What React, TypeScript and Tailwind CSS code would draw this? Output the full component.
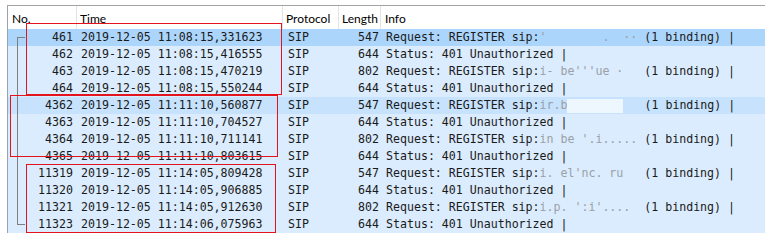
import React from "react";

type Row = {
  no: string;
  time: string;
  len: string;
  kind: "req" | "st";
  red?: React.ReactNode;
  bg: string;
};

const faint = "text-[#9aa0a8]";

const rows: Row[] = [
  { no: "461", time: "2019-12-05 11:08:15,331623", len: "547", kind: "req", bg: "bg-[#acd5fb]", red: <span className={faint}>{"'        .  ·· "}</span> },
  { no: "462", time: "2019-12-05 11:08:15,416555", len: "644", kind: "st", bg: "bg-[#daecfd]" },
  { no: "463", time: "2019-12-05 11:08:15,470219", len: "802", kind: "req", bg: "bg-[#daecfd]", red: <span className={faint}>{"i- be'''ue ·   "}</span> },
  { no: "464", time: "2019-12-05 11:08:15,550244", len: "644", kind: "st", bg: "bg-[#daecfd]" },
  { no: "4362", time: "2019-12-05 11:11:10,560877", len: "547", kind: "req", bg: "bg-[#c6e2fc]", red: <span className={faint}><span>{"ir.b"}</span><span className="inline-block w-[56px] h-[14px] align-middle bg-[#eef6fe]"></span><span className="inline-block w-[21px]"></span></span> },
  { no: "4363", time: "2019-12-05 11:11:10,704527", len: "644", kind: "st", bg: "bg-[#daecfd]" },
  { no: "4364", time: "2019-12-05 11:11:10,711141", len: "802", kind: "req", bg: "bg-[#daecfd]", red: <span className={faint}>{"in be '.i..... "}</span> },
  { no: "4365", time: "2019-12-05 11:11:10,803615", len: "644", kind: "st", bg: "bg-[#daecfd]" },
  { no: "11319", time: "2019-12-05 11:14:05,809428", len: "547", kind: "req", bg: "bg-[#daecfd]", red: <span className={faint}>{"i. el'nc. ru   "}</span> },
  { no: "11320", time: "2019-12-05 11:14:05,906885", len: "644", kind: "st", bg: "bg-[#daecfd]" },
  { no: "11321", time: "2019-12-05 11:14:05,912630", len: "802", kind: "req", bg: "bg-[#daecfd]", red: <span className={faint}>{"i.p. ':i'....  "}</span> },
  { no: "11323", time: "2019-12-05 11:14:06,075963", len: "644", kind: "st", bg: "bg-[#daecfd]" },
];

export default function App() {
  return (
    <div className="relative w-[772px] h-[247px] bg-white overflow-hidden">
      <div className="ml-[7px] mt-[5px] w-[758px] border-t border-l border-t-[#a3a3a3] border-l-[#97a3ae]">
        {/* header */}
        <div
          className="grid grid-cols-[69px_206px_56px_42px_1fr] h-[23px] bg-white text-[12px] text-black"
          style={{ fontFamily: '"Segoe UI", Lato, "Noto Sans", sans-serif' }}
        >
          <div className="flex items-center pl-[4px] pt-[3px] border-r border-[#e3e3e3]">No.</div>
          <div className="flex items-center pl-[3px] pt-[3px] border-r border-[#e3e3e3]">Time</div>
          <div className="flex items-center pl-[3px] pt-[3px] border-r border-[#e3e3e3]">Protocol</div>
          <div className="flex items-center pl-[3px] pt-[3px] border-r border-[#e3e3e3]">Length</div>
          <div className="flex items-center pl-[4px] pt-[3px]">Info</div>
        </div>
        {/* rows */}
        <div
          className="flex flex-col text-[11.6px] text-[#1a1a1a]"
          style={{ fontFamily: '"DejaVu Sans Mono", "Liberation Mono", monospace' }}
        >
          {rows.map((r) => (
            <div
              key={r.no}
              className={`grid grid-cols-[69px_206px_56px_42px_1fr] h-[17px] items-center whitespace-pre ${r.bg}`}
            >
              <div className="text-right pr-[4px]">{r.no}</div>
              <div className="pl-[4px]">{r.time}</div>
              <div className="pl-[5px]">SIP</div>
              <div className="text-right pr-[2px]">{r.len}</div>
              <div className="pl-[5px]">
                {r.kind === "req" ? (
                  <>
                    {"Request: REGISTER sip:"}
                    {r.red}
                    {"(1 binding) |"}
                  </>
                ) : (
                  "Status: 401 Unauthorized |"
                )}
              </div>
            </div>
          ))}
        </div>
      </div>

      {/* tree bracket */}
      <div className="absolute left-[17px] top-[37px] w-[8px] h-[188px] border-l border-t border-b border-[#7f7f7f]" />

      {/* red annotation boxes */}
      <div className="absolute left-[26px] top-[23px] w-[256px] h-[72px] border border-[#e4141e]" />
      <div className="absolute left-[10px] top-[95px] w-[268px] h-[62px] border border-[#e4141e]" />
      <div className="absolute left-[26px] top-[164px] w-[250px] h-[69px] border border-[#e4141e]" />
    </div>
  );
}
